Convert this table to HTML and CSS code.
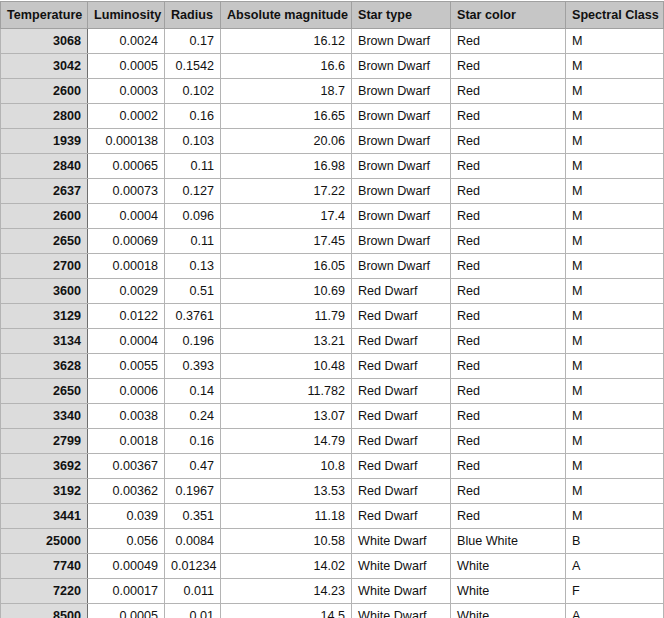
FILE: index.html
```html
<!DOCTYPE html>
<html>
<head>
<meta charset="utf-8">
<link rel="stylesheet" href="styles.css">
</head>
<body>
<table class="grid">
<colgroup>
<col class="c1"><col class="c2"><col class="c3"><col class="c4"><col class="c5"><col class="c6"><col class="c7">
</colgroup>
<thead>
<tr><th>Temperature</th><th>Luminosity</th><th>Radius</th><th>Absolute magnitude</th><th>Star type</th><th>Star color</th><th>Spectral Class</th></tr>
</thead>
<tbody>
<tr><th>3068</th><td class="n">0.0024</td><td class="n">0.17</td><td class="n">16.12</td><td>Brown Dwarf</td><td>Red</td><td>M</td></tr>
<tr><th>3042</th><td class="n">0.0005</td><td class="n">0.1542</td><td class="n">16.6</td><td>Brown Dwarf</td><td>Red</td><td>M</td></tr>
<tr><th>2600</th><td class="n">0.0003</td><td class="n">0.102</td><td class="n">18.7</td><td>Brown Dwarf</td><td>Red</td><td>M</td></tr>
<tr><th>2800</th><td class="n">0.0002</td><td class="n">0.16</td><td class="n">16.65</td><td>Brown Dwarf</td><td>Red</td><td>M</td></tr>
<tr><th>1939</th><td class="n">0.000138</td><td class="n">0.103</td><td class="n">20.06</td><td>Brown Dwarf</td><td>Red</td><td>M</td></tr>
<tr><th>2840</th><td class="n">0.00065</td><td class="n">0.11</td><td class="n">16.98</td><td>Brown Dwarf</td><td>Red</td><td>M</td></tr>
<tr><th>2637</th><td class="n">0.00073</td><td class="n">0.127</td><td class="n">17.22</td><td>Brown Dwarf</td><td>Red</td><td>M</td></tr>
<tr><th>2600</th><td class="n">0.0004</td><td class="n">0.096</td><td class="n">17.4</td><td>Brown Dwarf</td><td>Red</td><td>M</td></tr>
<tr><th>2650</th><td class="n">0.00069</td><td class="n">0.11</td><td class="n">17.45</td><td>Brown Dwarf</td><td>Red</td><td>M</td></tr>
<tr><th>2700</th><td class="n">0.00018</td><td class="n">0.13</td><td class="n">16.05</td><td>Brown Dwarf</td><td>Red</td><td>M</td></tr>
<tr><th>3600</th><td class="n">0.0029</td><td class="n">0.51</td><td class="n">10.69</td><td>Red Dwarf</td><td>Red</td><td>M</td></tr>
<tr><th>3129</th><td class="n">0.0122</td><td class="n">0.3761</td><td class="n">11.79</td><td>Red Dwarf</td><td>Red</td><td>M</td></tr>
<tr><th>3134</th><td class="n">0.0004</td><td class="n">0.196</td><td class="n">13.21</td><td>Red Dwarf</td><td>Red</td><td>M</td></tr>
<tr><th>3628</th><td class="n">0.0055</td><td class="n">0.393</td><td class="n">10.48</td><td>Red Dwarf</td><td>Red</td><td>M</td></tr>
<tr><th>2650</th><td class="n">0.0006</td><td class="n">0.14</td><td class="n">11.782</td><td>Red Dwarf</td><td>Red</td><td>M</td></tr>
<tr><th>3340</th><td class="n">0.0038</td><td class="n">0.24</td><td class="n">13.07</td><td>Red Dwarf</td><td>Red</td><td>M</td></tr>
<tr><th>2799</th><td class="n">0.0018</td><td class="n">0.16</td><td class="n">14.79</td><td>Red Dwarf</td><td>Red</td><td>M</td></tr>
<tr><th>3692</th><td class="n">0.00367</td><td class="n">0.47</td><td class="n">10.8</td><td>Red Dwarf</td><td>Red</td><td>M</td></tr>
<tr><th>3192</th><td class="n">0.00362</td><td class="n">0.1967</td><td class="n">13.53</td><td>Red Dwarf</td><td>Red</td><td>M</td></tr>
<tr><th>3441</th><td class="n">0.039</td><td class="n">0.351</td><td class="n">11.18</td><td>Red Dwarf</td><td>Red</td><td>M</td></tr>
<tr><th>25000</th><td class="n">0.056</td><td class="n">0.0084</td><td class="n">10.58</td><td>White Dwarf</td><td>Blue White</td><td>B</td></tr>
<tr><th>7740</th><td class="n">0.00049</td><td class="n">0.01234</td><td class="n">14.02</td><td>White Dwarf</td><td>White</td><td>A</td></tr>
<tr><th>7220</th><td class="n">0.00017</td><td class="n">0.011</td><td class="n">14.23</td><td>White Dwarf</td><td>White</td><td>F</td></tr>
<tr><th>8500</th><td class="n">0.0005</td><td class="n">0.01</td><td class="n">14.5</td><td>White Dwarf</td><td>White</td><td>A</td></tr>
</tbody>
</table>
</body>
</html>
```

FILE: styles.css
```css
html, body {
  margin: 0;
  padding: 0;
  background: #ffffff;
}
body {
  font-family: "Liberation Sans", Arial, sans-serif;
  font-size: 12.6px;
  color: #111;
  overflow: hidden;
}
.grid {
  border-collapse: collapse;
  table-layout: fixed;
  width: 663px;
  margin-top: 1px;
}
.c1 { width: 87px; }
.c2 { width: 77px; }
.c3 { width: 56px; }
.c4 { width: 131px; }
.c5 { width: 99px; }
.c6 { width: 115px; }
.c7 { width: 98px; }
.grid th, .grid td {
  border: 1px solid #b4b4b4;
  height: 25px;
  padding: 0 6px;
  box-sizing: border-box;
  white-space: nowrap;
  overflow: hidden;
}
.grid thead th {
  background: #c6c6c6;
  font-weight: bold;
  text-align: left;
  height: 27px;
  border-color: #a0a0a0;
}
.grid tbody th {
  background: #dcdcdc;
  font-weight: bold;
  text-align: right;
  border-right: 1px solid #6e6e6e;
}
.grid td {
  text-align: left;
}
.grid td.n {
  text-align: right;
}
```
